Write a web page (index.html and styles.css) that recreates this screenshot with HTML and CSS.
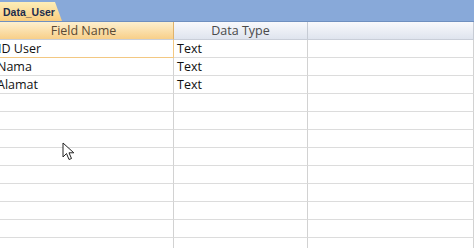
FILE: index.html
```html
<!DOCTYPE html>
<html>
<head>
    <title>Data_User</title>
    <link rel="stylesheet" href="styles.css">
</head>
<body>
    <div class="tab-bar">
        <div class="tab">Data_User</div>
    </div>
    <div class="sheet">
        <div class="head-row">
            <div class="head head-active">Field Name</div>
            <div class="head">Data Type</div>
            <div class="head"></div>
        </div>
        <div class="row">
            <div class="cell cell-selected">ID User</div>
            <div class="cell">Text</div>
            <div class="cell"></div>
        </div>
        <div class="row">
            <div class="cell">Nama</div>
            <div class="cell">Text</div>
            <div class="cell"></div>
        </div>
        <div class="row">
            <div class="cell">Alamat</div>
            <div class="cell">Text</div>
            <div class="cell"></div>
        </div>
        <div class="row"><div class="cell"></div><div class="cell"></div><div class="cell"></div></div>
        <div class="row"><div class="cell"></div><div class="cell"></div><div class="cell"></div></div>
        <div class="row"><div class="cell"></div><div class="cell"></div><div class="cell"></div></div>
        <div class="row"><div class="cell"></div><div class="cell"></div><div class="cell"></div></div>
        <div class="row"><div class="cell"></div><div class="cell"></div><div class="cell"></div></div>
        <div class="row"><div class="cell"></div><div class="cell"></div><div class="cell"></div></div>
        <div class="row"><div class="cell"></div><div class="cell"></div><div class="cell"></div></div>
        <div class="row"><div class="cell"></div><div class="cell"></div><div class="cell"></div></div>
        <div class="row"><div class="cell"></div><div class="cell"></div><div class="cell"></div></div>
    </div>

    <svg class="cursor" width="13" height="19" viewBox="0 0 13 19">
        <path d="M1 1 L1 15 L4.5 11.5 L7 17.5 L9.5 16.5 L7 10.8 L11.8 10.8 Z" fill="#fff" stroke="#222" stroke-width="1" stroke-linejoin="round"/>
    </svg>
</body>
</html>
```

FILE: styles.css
```css
body {
    margin: 0;
    width: 474px;
    height: 248px;
    overflow: hidden;
    background: #fff;
    font-family: 'Open Sans', 'Noto Sans', sans-serif;
    position: relative;
}

.tab-bar {
    height: 21px;
    background: #88a9d9;
    border-bottom: 1px solid #6f8fbf;
    display: flex;
    align-items: flex-end;
}

.tab {
    height: 19px;
    width: 64px;
    padding-left: 3px;
    box-sizing: border-box;
    background: linear-gradient(#fdeeb9, #f9cd7e);
    clip-path: polygon(0 0, 55px 0, 62px 100%, 0 100%);
    font-family: 'Liberation Sans', Arial, sans-serif;
    font-size: 10.5px;
    font-weight: bold;
    color: #1c2c4c;
    line-height: 20px;
    white-space: nowrap;
}

.sheet {
    margin-left: -6px;
}

.head-row,
.row {
    display: grid;
    grid-template-columns: 180px 134px 1fr;
}

.head {
    height: 17px;
    line-height: 17px;
    text-align: center;
    font-size: 12.5px;
    color: #4a4a4a;
    background: linear-gradient(#f8f9fc, #dfe4ee);
    border-right: 1px solid #c6cbd4;
    border-bottom: 1px solid #c9ced8;
}

.head-active {
    background: linear-gradient(#fdf0cf, #f8cf89);
    border-right-color: #e0b26a;
    color: #5a4a35;
}

.cell {
    height: 17px;
    line-height: 17px;
    font-size: 12.5px;
    color: #111;
    padding-left: 3px;
    border-right: 1px solid #d2d2d2;
    border-bottom: 1px solid #dcdcdc;
    white-space: nowrap;
    overflow: hidden;
}

.cell-selected {
    border: 1px solid #f3c882;
    border-top: none;
    height: 17px;
}

.cursor {
    position: absolute;
    left: 62px;
    top: 142px;
}
```
